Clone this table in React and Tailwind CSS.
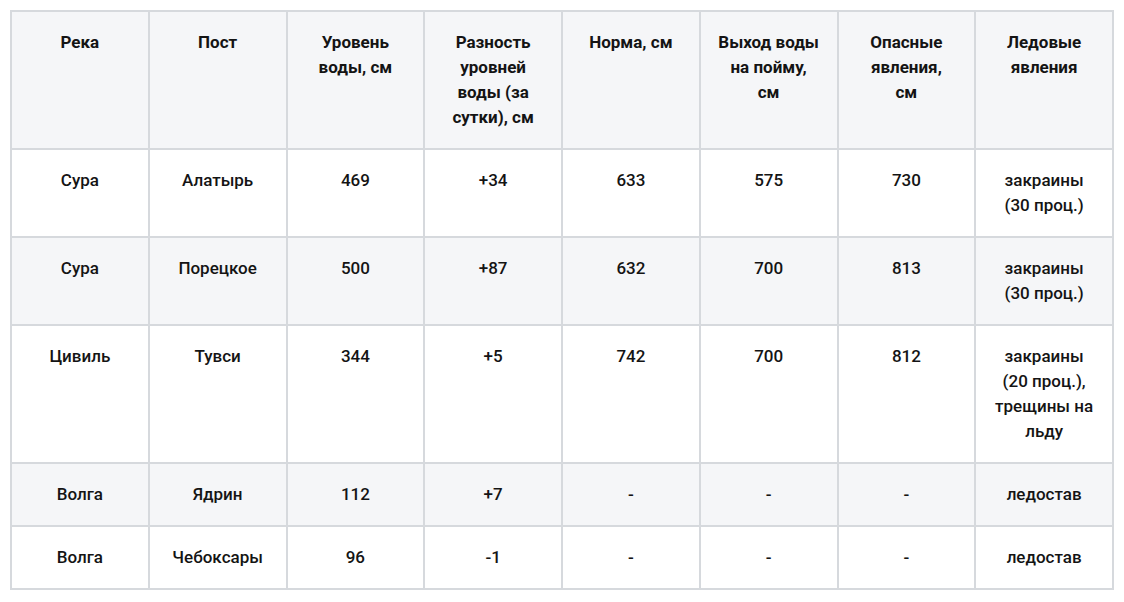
const headers = [
  "Река",
  "Пост",
  "Уровень воды, см",
  "Разность уровней воды (за сутки), см",
  "Норма, см",
  "Выход воды на пойму, см",
  <>
    Опасные явления,
    <br />
    см
  </>,
  "Ледовые явления",
];

const rows = [
  ["Сура", "Алатырь", "469", "+34", "633", "575", "730", "закраины (30 проц.)"],
  ["Сура", "Порецкое", "500", "+87", "632", "700", "813", "закраины (30 проц.)"],
  ["Цивиль", "Тувси", "344", "+5", "742", "700", "812", "закраины (20 проц.), трещины на льду"],
  ["Волга", "Ядрин", "112", "+7", "-", "-", "-", "ледостав"],
  ["Волга", "Чебоксары", "96", "-1", "-", "-", "-", "ледостав"],
];

export default function App() {
  return (
    <div className="min-h-[602px] bg-white pl-[10px] pt-[10px] font-['Roboto',sans-serif] text-[17px] leading-[25px] text-[#141414]">
      <table className="w-[1104px] table-fixed border-collapse">
        <thead>
          <tr className="bg-[#f5f6f8]">
            {headers.map((h, i) => (
              <th
                key={i}
                className="border-2 border-[#d6d9dd] px-[17px] py-[18px] text-center align-top font-bold"
              >
                {h}
              </th>
            ))}
          </tr>
        </thead>
        <tbody>
          {rows.map((row, r) => (
            <tr key={r} className={r % 2 === 1 ? "bg-[#f5f6f8]" : "bg-white"}>
              {row.map((cell, c) => (
                <td
                  key={c}
                  className="border-2 border-[#d6d9dd] px-[17px] py-[18px] text-center align-top font-medium"
                >
                  {cell}
                </td>
              ))}
            </tr>
          ))}
        </tbody>
      </table>
    </div>
  );
}
